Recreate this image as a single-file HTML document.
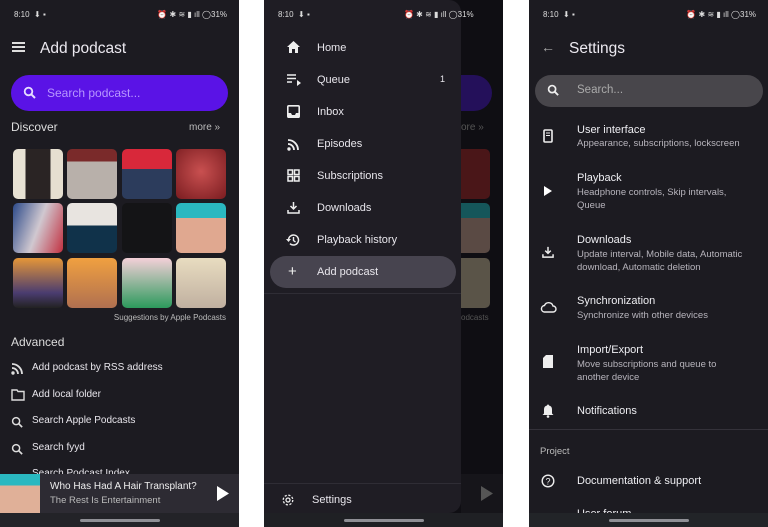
<!DOCTYPE html>
<html><head><meta charset="utf-8"><style>
*{margin:0;padding:0;box-sizing:border-box}
body{width:768px;height:527px;background:#fff;position:relative;overflow:hidden;font-family:"Liberation Sans",sans-serif;color:#e6e3ea}
.p{position:absolute;top:0;height:527px;background:#1c1b21;overflow:hidden}
.a{position:absolute;white-space:nowrap}
.sb{font-size:8px;color:#ddd;top:10px}
.t{width:50px;height:50px;border-radius:5px;position:absolute;overflow:hidden}
.nav{position:absolute;left:0;right:0;bottom:0;height:14px;background:#232328}
.nav i{position:absolute;left:50%;top:6px;width:80px;margin-left:-40px;height:3px;border-radius:2px;background:#8f8f95}
svg{position:absolute}
.li{font-size:10px;color:#e8e6ec}
.dr{font-size:11px;color:#e8e6ec}
.st{font-size:11px;color:#eeeef2}
.ss{font-size:9.5px;color:#b7b4bc;line-height:13px}
</style></head><body>

<!-- PANEL 1 -->
<div class="p" style="left:0;width:239px">
 <div class="a sb" style="left:14px">8:10 &nbsp;⬇ ▪</div>
 <div class="a sb" style="right:12px">⏰ ✱ ≋ ▮ ıll ◯31%</div>
 <div class="a" style="left:12px;top:42px;width:13px;height:2px;background:#ddd;box-shadow:0 4px 0 #ddd,0 8px 0 #ddd"></div>
 <div class="a" style="left:40px;top:40px;font-size:15.5px;color:#ece9f0">Add podcast</div>
 <div class="a" style="left:11px;top:75px;width:217px;height:36px;border-radius:18px;background:#5a13e6"></div>
 <svg style="left:23px;top:86px" width="14" height="14" viewBox="0 0 14 14"><circle cx="5.5" cy="5.5" r="3.8" fill="none" stroke="#e6dcff" stroke-width="1.8"/><path d="M8.3 8.3L12 12" stroke="#e6dcff" stroke-width="2"/></svg>
 <div class="a" style="left:47px;top:86px;font-size:12px;color:#b796ff">Search podcast...</div>
 <div class="a" style="left:11px;top:120px;font-size:12px;color:#ddd">Discover</div>
 <div class="a" style="left:189px;top:122px;font-size:10px;color:#bbb">more »</div>
 <div class="t" style="left:13px;top:149px;background:linear-gradient(90deg,#e8e2d4 0 25%,#2a2424 25% 75%,#e6dfd0 75%)"></div>
 <div class="t" style="left:67px;top:149px;background:linear-gradient(#7a2a2a 0 25%,#b8b0aa 25%);"></div>
 <div class="t" style="left:122px;top:149px;background:linear-gradient(#d8283a 0 40%,#2c3c5c 40%)"></div>
 <div class="t" style="left:176px;top:149px;background:radial-gradient(circle at 50% 45%,#c95050,#7a1c20)"></div>
 <div class="t" style="left:13px;top:203px;background:linear-gradient(110deg,#2c4a8a,#d0c8d0 50%,#c23040)"></div>
 <div class="t" style="left:67px;top:203px;background:linear-gradient(#e8e4e0 0 45%,#10324a 45%)"></div>
 <div class="t" style="left:122px;top:203px;background:#141416"></div>
 <div class="t" style="left:176px;top:203px;background:linear-gradient(#2ab8c0 0 30%,#e0a890 30%)"></div>
 <div class="t" style="left:13px;top:258px;background:linear-gradient(#e59638,#4a3c70 70%,#222)"></div>
 <div class="t" style="left:67px;top:258px;background:linear-gradient(#f0a040,#b07050)"></div>
 <div class="t" style="left:122px;top:258px;background:linear-gradient(#f4d0d8,#2c9a5c)"></div>
 <div class="t" style="left:176px;top:258px;background:linear-gradient(#e8dcc0,#c0b0a0)"></div>
 <div class="a" style="right:13px;top:313px;font-size:8px;color:#bbb">Suggestions by Apple Podcasts</div>
 <div class="a" style="left:11px;top:335px;font-size:12px;color:#ddd">Advanced</div>
 <svg style="left:11px;top:362px" width="13" height="13" viewBox="0 0 13 13"><circle cx="2" cy="11" r="1.7" fill="#ddd"/><path d="M1 6a6 6 0 0 1 6 6M1 2a10 10 0 0 1 10 10" fill="none" stroke="#ddd" stroke-width="1.8"/></svg>
 <div class="a li" style="left:32px;top:362px">Add podcast by RSS address</div>
 <svg style="left:11px;top:389px" width="14" height="12" viewBox="0 0 14 12"><path d="M1 1h5l1 1.5h6v8.5H1z" fill="none" stroke="#ddd" stroke-width="1.4"/></svg>
 <div class="a li" style="left:32px;top:389px">Add local folder</div>
 <svg style="left:11px;top:416px" width="13" height="13" viewBox="0 0 14 14"><circle cx="5.5" cy="5.5" r="3.8" fill="none" stroke="#ddd" stroke-width="1.6"/><path d="M8.3 8.3L12 12" stroke="#ddd" stroke-width="1.8"/></svg>
 <div class="a li" style="left:32px;top:415px">Search Apple Podcasts</div>
 <svg style="left:11px;top:443px" width="13" height="13" viewBox="0 0 14 14"><circle cx="5.5" cy="5.5" r="3.8" fill="none" stroke="#ddd" stroke-width="1.6"/><path d="M8.3 8.3L12 12" stroke="#ddd" stroke-width="1.8"/></svg>
 <div class="a li" style="left:32px;top:442px">Search fyyd</div>
 <div class="a li" style="left:32px;top:468px">Search Podcast Index</div>
 <div class="a" style="left:0;top:474px;width:239px;height:39px;background:#2d2b33"></div>
 <div class="a" style="left:0;top:474px;width:40px;height:39px;background:linear-gradient(#2ab8c0 0 30%,#e0b098 30%)"></div>
 <div class="a" style="left:50px;top:481px;font-size:10px;color:#eee">Who Has Had A Hair Transplant?</div>
 <div class="a" style="left:50px;top:495px;font-size:9.5px;color:#bbb">The Rest Is Entertainment</div>
 <svg style="left:216px;top:486px" width="13" height="15" viewBox="0 0 13 15"><path d="M1 0L13 7.5L1 15z" fill="#fff"/></svg>
 <div class="nav"><i></i></div>
</div>

<!-- PANEL 2 -->
<div class="p" style="left:264px;width:239px;background:#0f0e13">
 <div class="a" style="left:197px;top:75px;width:31px;height:36px;border-radius:0 18px 18px 0;background:#24105a"></div>
 <div class="a" style="left:197px;top:122px;font-size:10px;color:#555">ore »</div>
 <div class="a" style="left:197px;top:149px;width:29px;height:50px;border-radius:0 5px 5px 0;background:#4a1618"></div>
 <div class="a" style="left:197px;top:203px;width:29px;height:50px;border-radius:0 5px 5px 0;background:linear-gradient(#15565a 0 30%,#5a4a44 30%)"></div>
 <div class="a" style="left:197px;top:258px;width:29px;height:50px;border-radius:0 5px 5px 0;background:#5a5448"></div>
 <div class="a" style="left:197px;top:313px;font-size:8px;color:#555">odcasts</div>
 <div class="a" style="left:197px;top:474px;width:42px;height:39px;background:#16151a"></div>
 <svg style="left:216px;top:486px" width="13" height="15" viewBox="0 0 13 15"><path d="M1 0L13 7.5L1 15z" fill="#555"/></svg>
 <div class="a" style="left:0;top:0;width:197px;height:513px;background:#1f1d24;border-radius:0 12px 12px 0"></div>
 <div class="a sb" style="left:14px">8:10 &nbsp;⬇ ▪</div>
 <div class="a sb" style="left:140px">⏰ ✱ ≋ ▮ ıll ◯31%</div>
 <svg style="left:23px;top:41px" width="13" height="12" viewBox="0 0 13 12"><path d="M6.5 0L13 6h-2v6H8V8H5v4H2V6H0z" fill="#eee"/></svg>
 <div class="a dr" style="left:53px;top:42px">Home</div>
 <svg style="left:23px;top:74px" width="14" height="12" viewBox="0 0 14 12"><path d="M0 1h9M0 4.5h9M0 8h5" stroke="#eee" stroke-width="1.5"/><path d="M10 6l4 3-4 3z" fill="#eee"/></svg>
 <div class="a dr" style="left:53px;top:74px">Queue</div>
 <div class="a dr" style="left:176px;top:74px;font-size:9px">1</div>
 <svg style="left:23px;top:105px" width="13" height="13" viewBox="0 0 13 13"><rect x="0.8" y="0.8" width="11.4" height="11.4" rx="1" fill="none" stroke="#eee" stroke-width="1.6"/><path d="M1 8h3l1 2h3l1-2h3v4H1z" fill="#eee"/></svg>
 <div class="a dr" style="left:53px;top:106px">Inbox</div>
 <svg style="left:23px;top:138px" width="13" height="13" viewBox="0 0 13 13"><circle cx="2" cy="11" r="1.7" fill="#eee"/><path d="M1 6a6 6 0 0 1 6 6M1 2a10 10 0 0 1 10 10" fill="none" stroke="#eee" stroke-width="1.8"/></svg>
 <div class="a dr" style="left:53px;top:138px">Episodes</div>
 <svg style="left:23px;top:169px" width="13" height="13" viewBox="0 0 13 13"><g fill="none" stroke="#eee" stroke-width="1.5"><rect x="1" y="1" width="4.5" height="4.5"/><rect x="7.5" y="1" width="4.5" height="4.5"/><rect x="1" y="7.5" width="4.5" height="4.5"/><rect x="7.5" y="7.5" width="4.5" height="4.5"/></g></svg>
 <div class="a dr" style="left:53px;top:170px">Subscriptions</div>
 <svg style="left:23px;top:201px" width="13" height="13" viewBox="0 0 13 13"><path d="M6.5 1v7M3.5 5l3 3 3-3M1 9v3h11V9" fill="none" stroke="#eee" stroke-width="1.5"/></svg>
 <div class="a dr" style="left:53px;top:202px">Downloads</div>
 <svg style="left:22px;top:233px" width="14" height="14" viewBox="0 0 14 14"><path d="M2.5 7a5 5 0 1 1 1.5 3.6" fill="none" stroke="#eee" stroke-width="1.5"/><path d="M0 6h5L2.5 9z" fill="#eee"/><path d="M7.5 4v3.5l2 1.5" fill="none" stroke="#eee" stroke-width="1.4"/></svg>
 <div class="a dr" style="left:53px;top:234px">Playback history</div>
 <div class="a" style="left:6px;top:256px;width:186px;height:32px;border-radius:16px;background:#47444f"></div>
 <div class="a" style="left:24px;top:263px;font-size:15px;color:#eee">+</div>
 <div class="a dr" style="left:53px;top:266px">Add podcast</div>
 <div class="a" style="left:0;top:293px;width:197px;height:1px;background:#2f2d35"></div>
 <div class="a" style="left:0;top:483px;width:197px;height:1px;background:#2f2d35"></div>
 <svg style="left:17px;top:493px" width="14" height="14" viewBox="0 0 14 14"><circle cx="7" cy="7" r="2" fill="none" stroke="#eee" stroke-width="1.3"/><circle cx="7" cy="7" r="4.8" fill="none" stroke="#eee" stroke-width="1.3" stroke-dasharray="2.2 1.6"/></svg>
 <div class="a dr" style="left:48px;top:494px">Settings</div>
 <div class="nav" style="background:#1f2024"><i></i></div>
</div>

<!-- PANEL 3 -->
<div class="p" style="left:529px;width:239px">
 <div class="a sb" style="left:14px">8:10 &nbsp;⬇ ▪</div>
 <div class="a sb" style="right:12px">⏰ ✱ ≋ ▮ ıll ◯31%</div>
 <div class="a" style="left:12px;top:39px;font-size:14px;color:#aaa">←</div>
 <div class="a" style="left:40px;top:40px;font-size:15.5px;color:#ece9f0">Settings</div>
 <div class="a" style="left:6px;top:75px;width:228px;height:32px;border-radius:16px;background:#48464b"></div>
 <svg style="left:18px;top:84px" width="13" height="13" viewBox="0 0 14 14"><circle cx="5.5" cy="5.5" r="3.8" fill="none" stroke="#eee" stroke-width="1.8"/><path d="M8.3 8.3L12 12" stroke="#eee" stroke-width="2"/></svg>
 <div class="a" style="left:48px;top:84px;font-size:11.5px;color:#aaa">Search...</div>

 <svg style="left:14px;top:129px" width="10" height="14" viewBox="0 0 10 14"><rect x="1" y="1" width="8" height="12" rx="1" fill="none" stroke="#eee" stroke-width="1.6"/><path d="M3 4h4M3 6.5h4" stroke="#eee"/></svg>
 <div class="a st" style="left:48px;top:124px">User interface</div>
 <div class="a ss" style="left:48px;top:137px">Appearance, subscriptions, lockscreen</div>

 <svg style="left:15px;top:186px" width="8" height="10" viewBox="0 0 8 10"><path d="M0 0l8 5-8 5z" fill="#fff"/></svg>
 <div class="a st" style="left:48px;top:172px">Playback</div>
 <div class="a ss" style="left:48px;top:186px">Headphone controls, Skip intervals,<br>Queue</div>

 <svg style="left:13px;top:246px" width="12" height="12" viewBox="0 0 13 13"><path d="M6.5 1v7M3.5 5l3 3 3-3M1 9v3h11V9" fill="none" stroke="#eee" stroke-width="1.6"/></svg>
 <div class="a st" style="left:48px;top:234px">Downloads</div>
 <div class="a ss" style="left:48px;top:248px">Update interval, Mobile data, Automatic<br>download, Automatic deletion</div>

 <svg style="left:11px;top:302px" width="17" height="11" viewBox="0 0 17 11"><path d="M4 10h9a3 3 0 0 0 0-6 4.5 4.5 0 0 0-8.5-.5A3.3 3.3 0 0 0 4 10z" fill="none" stroke="#eee" stroke-width="1.4"/></svg>
 <div class="a st" style="left:48px;top:295px">Synchronization</div>
 <div class="a ss" style="left:48px;top:309px">Synchronize with other devices</div>

 <svg style="left:14px;top:355px" width="10" height="13" viewBox="0 0 10 13"><path d="M3 0h7v13H0V3z" fill="#eee"/></svg>
 <div class="a st" style="left:48px;top:344px">Import/Export</div>
 <div class="a ss" style="left:48px;top:358px">Move subscriptions and queue to<br>another device</div>

 <svg style="left:13px;top:404px" width="12" height="14" viewBox="0 0 12 14"><path d="M6 0.5a1 1 0 0 1 1 1 4 4 0 0 1 3 4v4l1.5 1.5h-11L2 9.5v-4a4 4 0 0 1 3-4 1 1 0 0 1 1-1z" fill="#eee"/><circle cx="6" cy="12.5" r="1.3" fill="#eee"/></svg>
 <div class="a st" style="left:48px;top:405px">Notifications</div>
 <div class="a" style="left:0;top:429px;width:239px;height:1px;background:#34323a"></div>
 <div class="a" style="left:11px;top:446px;font-size:9.5px;color:#bbb">Project</div>
 <svg style="left:12px;top:474px" width="14" height="14" viewBox="0 0 14 14"><circle cx="7" cy="7" r="5.8" fill="none" stroke="#eee" stroke-width="1.4"/><text x="7" y="10.3" font-size="9" text-anchor="middle" fill="#eee" font-family="Liberation Sans">?</text></svg>
 <div class="a st" style="left:48px;top:475px">Documentation &amp; support</div>
 <div class="a st" style="left:48px;top:508px">User forum</div>
 <div class="nav" style="background:#222428"><i></i></div>
</div>
</body></html>
